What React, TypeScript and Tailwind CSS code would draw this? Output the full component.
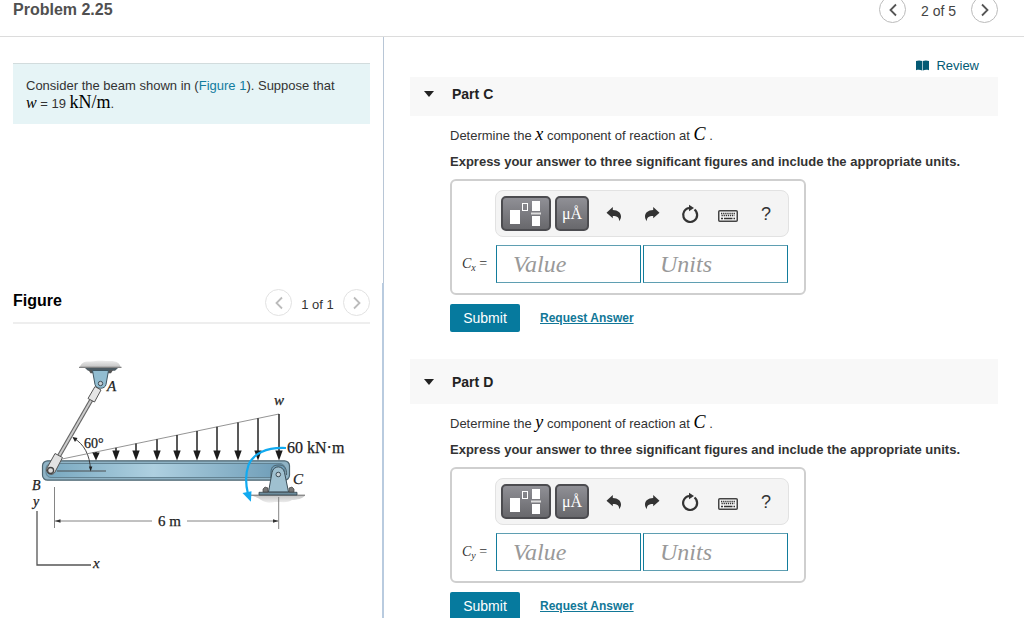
import React from 'react';

function Chevron({ dir }: { dir: 'left' | 'right' }) {
  return (
    <svg viewBox="0 0 12 16" className="h-4 w-3" fill="none" stroke="currentColor" strokeWidth="1.800" aria-hidden="true">
      <path d={dir === 'left' ? 'M9 2.500 3.500 8 9 13.500' : 'M3 2.500 8.500 8 3 13.500'} />
    </svg>
  );
}

function UndoIcon({ flip = false }: { flip?: boolean }) {
  return (
    <svg viewBox="0 0 16 16" className="size-4" fill="#333" aria-hidden="true">
      <path
        transform={flip ? 'matrix(-1 0 0 1 16 0)' : undefined}
        d="M.5 6.700 6.800 1v3c5.200.2 8.200 2.800 8.200 6.500 0 1.700-.7 3.300-1.900 4.700.4-3.300-1.700-5.200-6.300-5.200v2.300z"
      />
    </svg>
  );
}

function ResetIcon() {
  return (
    <svg viewBox="0 0 18 20" className="h-5 w-[18px]" aria-hidden="true">
      <path d="M13.500 5.500A7 7 0 1 1 8.500 4" fill="none" stroke="#333" strokeWidth="2.200" />
      <path d="M8 .8v6.400l5-3.200z" fill="#333" />
    </svg>
  );
}

function KeyboardIcon() {
  return (
    <svg viewBox="0 0 20 12" className="h-3 w-5" aria-hidden="true">
      <rect x=".75" y=".75" width="18.500" height="10.500" rx="1" fill="#f8f8f8" stroke="#444" strokeWidth="1.500" />
      <path d="M3 3.500h14M3.500 5.500h13" stroke="#333" strokeWidth="1.300" strokeDasharray="1.300 .8" />
      <path d="M3 8.500h2m1 0h8.500m1 0H17" stroke="#333" strokeWidth="1.400" />
    </svg>
  );
}

function TemplateIcon() {
  return (
    <svg viewBox="0 0 32 26" className="h-[26px] w-8" aria-hidden="true">
      <rect x="0" y="9" width="10" height="14" fill="#fff" />
      <rect x="12.500" y="2.500" width="5" height="7" fill="none" stroke="#fff" />
      <rect x="22" y="0" width="8" height="10" fill="#fff" />
      <rect x="21" y="11.500" width="10" height="2" fill="#ddd" />
      <rect x="22" y="15" width="8" height="10" fill="#fff" />
    </svg>
  );
}

function BookIcon() {
  return (
    <svg viewBox="0 0 13 11" className="h-[11px] w-[13px]" fill="#045a74" aria-hidden="true">
      <path d="M0 1C2 .2 4.300.2 6.200 1V10.500C4.300 9.700 2 9.700 0 10.200z" />
      <path d="M13 1C11 .2 8.700.2 6.800 1V10.500C8.700 9.700 11 9.700 13 10.200z" />
    </svg>
  );
}

const ARROWS = [96, 116, 136, 157, 177, 197, 217, 238, 258, 279];

function BeamFigure() {
  return (
    <svg
      viewBox="13 324 357 260"
      className="h-auto w-full max-w-[400px] font-['Liberation_Serif',serif]"
      role="img"
      aria-label="Beam BC with link AB and triangular distributed load"
    >
      <defs>
        <linearGradient id="beam" x1="0" y1="0" x2="1" y2="0">
          <stop offset="0" stopColor="#78a8c0" />
          <stop offset=".45" stopColor="#aed0e0" />
          <stop offset="1" stopColor="#6c9bb6" />
        </linearGradient>
        <linearGradient id="ceiling" x1="0" y1="0" x2="0" y2="1">
          <stop offset="0" stopColor="#ececec" />
          <stop offset="1" stopColor="#c4c4c4" />
        </linearGradient>
        <linearGradient id="ground" x1="0" y1="0" x2="0" y2="1">
          <stop offset="0" stopColor="#c6c6c6" />
          <stop offset="1" stopColor="#eee" />
        </linearGradient>
      </defs>

      {/* ceiling support A */}
      <path d="M80 367c1-4 4-6 11-5.500 8-1.500 13-.5 20-.5 5 0 9 2 9.500 6z" fill="url(#ceiling)" />
      <path d="M79 367.300h42.500" stroke="#666" />
      <path d="M85 368h33l-3 2.700H88z" fill="#4d5b63" />
      <path d="M88.500 370h5v3.300h-3zM108 370h5l-2 3.300h-3z" fill="#555" />
      <path d="M92.500 370.500h16l-2.500 14c-.8 5-10 5-11 0z" fill="#92bdd1" stroke="#3f5662" />

      {/* link AB */}
      <path d="M93 397 59 456" stroke="#666" strokeWidth="4.300" />
      <path d="M93 397 59 456" stroke="#ccc" strokeWidth="2" />
      <path d="M95 386.500 101 390 94.500 402 88 398.500z" fill="#e6e6e6" stroke="#555" />
      <circle cx="100.500" cy="383.500" r="2.200" fill="#c8d2d8" stroke="#3d4c55" />

      {/* beam */}
      <rect x="42.500" y="460.800" width="247" height="19.400" rx="5" fill="#8fb3c5" stroke="#4c6470" strokeWidth="1.200" />
      <rect x="46" y="463.500" width="239" height="14" rx="5" fill="url(#beam)" stroke="#5d7d8c" strokeWidth=".9" />
      <path d="M55 453.500 62.500 457.500 55 472c-2.500 5-10.500 1-8.200-3.700z" fill="#e2e2e2" stroke="#555" />
      <circle cx="50.600" cy="470.500" r="3" fill="#ddd" stroke="#444" strokeWidth="1.300" />
      <path d="M57 471h49" stroke="#444" strokeWidth=".9" />

      {/* 60 degree angle */}
      <path d="M73.500 438C84 444 90 455 90.500 470" fill="none" stroke="#333" strokeWidth=".9" />
      <path d="m72.500 437 5 1-2.500 4zM90.700 471.500l-1.800-5h3.400z" fill="#222" />

      {/* distributed load */}
      <path d="M62 459 279 414" stroke="#888" strokeWidth=".9" />
      {ARROWS.map((x) => {
        const top = 414 + (279 - x) * 0.207;
        return (
          <g key={x}>
            <path d={`M${x} ${top}V455`} stroke="#222" strokeWidth="1.500" />
            <path d={`M${x} 460.500l-3.700-${x < 100 ? 8 : 10}h7.400z`} fill="#1c1c1c" />
          </g>
        );
      })}

      {/* pin support C */}
      <path d="M252 495.500h53c-2 3-8 4.500-13 4.500-5 4-13 1-20 2.500-8 1-10-3-20-7z" fill="url(#ground)" />
      <path d="M251 495.200h54" stroke="#666" />
      <path d="M271 478c0-8-1-13 8-13 6 0 8 4 7.500 10" fill="none" stroke="#4c6470" />
      <path d="M268.500 492 272 472.500c1.500-7.500 11-7.500 12.500 0l4 19.500z" fill="#9fc0d0" stroke="#3a4c56" />
      <path d="M259 492.300h38v2.700h-38z" fill="#6e8d9d" stroke="#35444c" strokeWidth=".8" />
      <path d="M263 492v-3l2-2 3 1v4zM289 492v-4l3-1 2 2v3z" fill="#777" stroke="#444" strokeWidth=".7" />
      <circle cx="278.300" cy="474.500" r="2.300" fill="#c8d2d8" stroke="#3d4c55" />

      {/* applied moment */}
      <path d="M286 448C266 447 253 454 248.500 465 245 475 246 486 248 494" fill="none" stroke="#11aaf0" strokeWidth="2.200" />
      <path d="m242.500 493 9-1.700-.6 10.500z" fill="#11aaf0" />

      {/* dimension line */}
      <g stroke="#777" strokeWidth=".9">
        <path d="M54.500 487v41M278.700 497v32M55 521h97M187 521h91" />
      </g>
      <path d="m55 521 5.500-1.800v3.600zM278.500 521l-5.500-1.800v3.600z" fill="#333" />

      {/* coordinate axes */}
      <path d="M37 511v54h54" fill="none" stroke="#555" strokeWidth="1.300" />

      <g fill="#222" stroke="#222" strokeWidth=".25" fontSize="15">
        <text x="107" y="391" fontStyle="italic">A</text>
        <text x="84" y="448" fontSize="14">60°</text>
        <text x="274" y="405" fontStyle="italic">w</text>
        <text x="287" y="453" fontSize="16">60 kN·m</text>
        <text x="293" y="484" fontStyle="italic">C</text>
        <text x="32" y="490" fontSize="14" fontStyle="italic">B</text>
        <text x="33" y="506" fontSize="14" fontStyle="italic">y</text>
        <text x="158" y="526">6 m</text>
        <text x="93" y="568" fontStyle="italic">x</text>
      </g>
    </svg>
  );
}

function ToolButton({ label, children }: { label: string; children: React.ReactNode }) {
  return (
    <button type="button" aria-label={label} className="flex h-[34px] w-[38px] items-center justify-center text-[#333]">
      {children}
    </button>
  );
}

function AnswerBox({ id, axis }: { id: string; axis: string }) {
  const field =
    'h-[38px] min-w-0 flex-1 border border-x-[#127c9c] border-y-[#5f9fb2] bg-white px-4 text-2xl italic text-[#333] outline-none placeholder:text-[#999] placeholder:opacity-100';
  const dark =
    'flex h-[35px] shrink-0 items-center justify-center rounded-[5px] border-2 border-[#4c4c50] bg-linear-to-b from-[#909096] to-[#68686c]';
  return (
    <div className="w-full max-w-[356px] rounded-md border-2 border-[#cfcfcf] pt-[9px] pr-[15px] pb-[10px] pl-[10px]">
      <div className="ml-[33px] flex h-[47px] items-center rounded-lg border border-[#e2e2e2] bg-[#f4f4f4] pl-[5px]">
        <button type="button" aria-label="Templates" className={`${dark} w-[50px]`}>
          <TemplateIcon />
        </button>
        <button
          type="button"
          aria-label="Symbols"
          className={`${dark} ml-1 w-[34px] font-['Liberation_Serif',serif] text-base text-white`}
        >
          μÅ
        </button>
        <div className="ml-[6px] flex">
          <ToolButton label="Undo"><UndoIcon /></ToolButton>
          <ToolButton label="Redo"><UndoIcon flip /></ToolButton>
          <ToolButton label="Reset"><ResetIcon /></ToolButton>
          <ToolButton label="Keyboard shortcuts"><span className="pt-1"><KeyboardIcon /></span></ToolButton>
          <ToolButton label="Help"><span className="text-lg">?</span></ToolButton>
        </div>
      </div>
      <div className="mt-2 flex items-center pr-px font-['Liberation_Serif',serif]">
        <label htmlFor={id} className="w-[34px] shrink-0 text-sm leading-5 whitespace-nowrap text-[#333]">
          <i>C</i>
          <sub className="text-[10px] italic">{axis}</sub> =
        </label>
        <div className="flex min-w-0 flex-1 gap-[2px]">
          <input id={id} placeholder="Value" className={field} />
          <input aria-label="Units" placeholder="Units" className={field} />
        </div>
      </div>
    </div>
  );
}

function Part({ letter, axis, headerClass }: { letter: string; axis: string; headerClass: string }) {
  return (
    <section>
      <h2 className={`flex items-center bg-[#f8f8f8] px-[14px] ${headerClass}`}>
        <button type="button" className="flex items-center gap-[18px] text-sm leading-5 font-bold text-[#222]">
          <svg viewBox="0 0 10 6" className="h-[6px] w-[10px]" aria-hidden="true">
            <path d="M0 0h10L5 6z" fill="#222" />
          </svg>
          Part {letter}
        </button>
      </h2>
      <div className="pt-2 pr-6 pb-[27px] pl-10 text-[13px] leading-5">
        <p>
          Determine the <i className="font-['Liberation_Serif',serif] text-lg leading-5 text-black">{axis}</i> component of
          reaction at <i className="font-['Liberation_Serif',serif] text-lg leading-5 text-black">C</i> .
        </p>
        <p className="mt-[6px] mb-[7px] font-bold">
          Express your answer to three significant figures and include the appropriate units.
        </p>
        <AnswerBox id={`answer-${axis}`} axis={axis} />
        <div className="mt-[9px] flex items-center gap-5">
          <button type="button" className="h-7 w-[70px] rounded-xs bg-[#067a9e] text-sm text-white">
            Submit
          </button>
          <a href="#request" className="text-xs font-bold text-[#127797] underline">
            Request Answer
          </a>
        </div>
      </div>
    </section>
  );
}

export default function App() {
  const circle = 'flex size-[27px] items-center justify-center rounded-full border';
  return (
    <div className="flex h-screen flex-col overflow-hidden bg-white font-['Liberation_Sans',Arial,sans-serif] text-[#333]">
      <header className="h-[37px] shrink-0 border-b border-[#dcdcdc] pr-[26px] pl-[13px]">
        <div className="flex h-[19px] items-center justify-between">
          <h1 className="text-base font-bold text-[#505050]">Problem 2.25</h1>
          <nav className="flex items-center text-sm text-[#444]">
            <button type="button" aria-label="Previous problem" className={`${circle} border-[#bbb] text-[#555]`}>
              <Chevron dir="left" />
            </button>
            <span className="w-[65px] pt-[2px] text-center">2 of 5</span>
            <button type="button" aria-label="Next problem" className={`${circle} border-[#bbb] text-[#555]`}>
              <Chevron dir="right" />
            </button>
          </nav>
        </div>
      </header>

      <main className="flex min-h-0 flex-1">
        <aside className="flex w-[37.5%] shrink-0 flex-col">
          <div className="h-[246px] shrink-0 border-r border-[#b8c6d6] pt-[26px] pr-[13px] pl-[13px]">
            <p className="border-t border-[#d2dcdd] bg-[#e6f4f6] px-[13px] pt-[14px] pb-3 text-[13px] leading-4">
              Consider the beam shown in (
              <a href="#figure" className="text-[#127c9f]">Figure 1</a>). Suppose that
              <br />
              <i className="font-['Liberation_Serif',serif] text-base leading-4 text-black">w</i> = 19{' '}
              <span className="font-['Liberation_Serif',serif] text-lg leading-4 text-black">kN/m</span>.
            </p>
          </div>
          <div id="figure" className="flex-1 border-r-2 border-[#b9cbdf] pr-3 pl-[13px]">
            <div className="flex h-[41px] items-center justify-between border-b-2 border-[#eee]">
              <h2 className="pb-1 text-base font-bold text-black">Figure</h2>
              <nav className="flex items-center text-[13px]">
                <button type="button" aria-label="Previous figure" className={`${circle} border-[#e2e2e2] text-[#bbb]`}>
                  <Chevron dir="left" />
                </button>
                <span className="w-[51px] pt-1 text-center">1 of 1</span>
                <button type="button" aria-label="Next figure" className={`${circle} border-[#e2e2e2] text-[#bbb]`}>
                  <Chevron dir="right" />
                </button>
              </nav>
            </div>
            <BeamFigure />
          </div>
        </aside>

        <div className="min-w-0 flex-1 px-[26px]">
          <div className="flex h-10 items-center justify-end pt-[17px] pr-[19px]">
            <a href="#review" className="flex items-center gap-[7px] text-[13px] text-[#045a74]">
              <BookIcon />
              Review
            </a>
          </div>
          <Part letter="C" axis="x" headerClass="h-[39px] pb-[6px]" />
          <Part letter="D" axis="y" headerClass="h-[45px]" />
        </div>
      </main>
    </div>
  );
}
